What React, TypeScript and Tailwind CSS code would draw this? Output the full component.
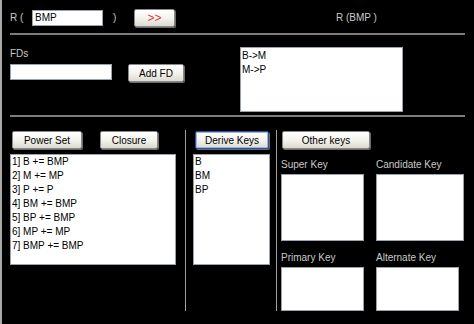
import React from "react";

const closureLines = [
  "1] B += BMP",
  "2] M += MP",
  "3] P += P",
  "4] BM += BMP",
  "5] BP += BMP",
  "6] MP += MP",
  "7] BMP += BMP",
];

const keyLines = ["B", "BM", "BP"];
const fdLines = ["B->M", "M->P"];

function XpButton({
  label,
  className = "",
  focused = false,
  red = false,
}: {
  label: string;
  className?: string;
  focused?: boolean;
  red?: boolean;
}) {
  return (
    <button
      className={`flex h-[18px] items-center justify-center rounded-[2px] border bg-gradient-to-b from-white via-[#f4f3ee] to-[#dcdad0] shadow-[1px_1px_0_#6b6b6b] ${
        focused ? "border-[#2f4f9f] ring-1 ring-inset ring-[#9db3e6]" : "border-[#8a8a8a]"
      } ${red ? "text-[12px] text-[#e8363a]" : "text-black"} ${className}`}
    >
      {label}
    </button>
  );
}

function ListBox({ lines, className = "" }: { lines: string[]; className?: string }) {
  return (
    <div className={`border border-[#9aa3ad] bg-white pl-px leading-[14px] text-black ${className}`}>
      {lines.map((l) => (
        <div key={l}>{l}</div>
      ))}
    </div>
  );
}

function Rule() {
  return <div className="ml-[8px] h-[2px] w-[455px] bg-[#7c7c7c]" />;
}

export default function App() {
  return (
    <div className="h-[324px] w-[474px] overflow-hidden border-l-2 border-[#a8a8a8] bg-black font-['Liberation_Sans',Arial,sans-serif] text-[10px] text-[#c9c9c9]">
      {/* relation row */}
      <div className="flex h-[19px] items-center pl-[8px] mt-[8px]">
        <span className="w-[22px]">R (</span>
        <div className="flex h-[16px] w-[71px] items-center border border-[#9aa3ad] bg-white pl-[2px] text-black">
          BMP
        </div>
        <span className="ml-[10px] w-[21px]">)</span>
        <XpButton label=">>" red className="w-[41px]" />
        <span className="ml-[161px]">R (BMP )</span>
      </div>

      <div className="mt-[6px]">
        <Rule />
      </div>

      {/* FDs */}
      <div className="flex h-[80px] pl-[8px]">
        <div className="w-[230px] pt-[11px]">
          <div className="h-[12px]">FDs</div>
          <div className="mt-[6px] flex items-start">
            <div className="h-[16px] w-[102px] border border-[#9aa3ad] bg-white" />
            <XpButton label="Add FD" className="ml-[16px] w-[56px]" />
          </div>
        </div>
        <ListBox lines={fdLines} className="mt-[12px] h-[65px] w-[163px] pt-px" />
      </div>

      <Rule />

      {/* keys */}
      <div className="flex items-start pl-[8px]">
        <div className="w-[166px] pt-[14px]">
          <div className="flex">
            <XpButton label="Power Set" className="ml-[2px] w-[70px]" />
            <XpButton label="Closure" className="ml-[18px] w-[58px]" />
          </div>
          <ListBox lines={closureLines} className="mt-[5px] h-[111px]" />
        </div>

        <div className="ml-[9px] mt-[13px] h-[181px] w-px bg-[#a0a0a0]" />

        <div className="ml-[7px] w-[77px] pt-[14px]">
          <XpButton label="Derive Keys" focused className="ml-[2px] w-[74px]" />
          <ListBox lines={keyLines} className="mt-[5px] h-[111px]" />
        </div>

        <div className="ml-[6px] mt-[13px] h-[181px] w-px bg-[#a0a0a0]" />

        <div className="ml-[4px] pt-[14px]">
          <XpButton label="Other keys" className="ml-px w-[88px]" />
          <div className="mt-[8px] grid grid-cols-[83px_88px] gap-x-[12px]">
            <div className="h-[12px]">Super Key</div>
            <div className="h-[12px]">Candidate Key</div>
            <div className="mt-[5px] h-[67px] border border-[#9aa3ad] bg-white" />
            <div className="mt-[5px] h-[67px] border border-[#9aa3ad] bg-white" />
            <div className="mt-[9px] h-[12px]">Primary Key</div>
            <div className="mt-[9px] h-[12px]">Alternate Key</div>
            <div className="mt-[5px] h-[44px] border border-[#9aa3ad] bg-white" />
            <div className="mt-[5px] h-[44px] w-[83px] border border-[#9aa3ad] bg-white" />
          </div>
        </div>
      </div>
    </div>
  );
}
